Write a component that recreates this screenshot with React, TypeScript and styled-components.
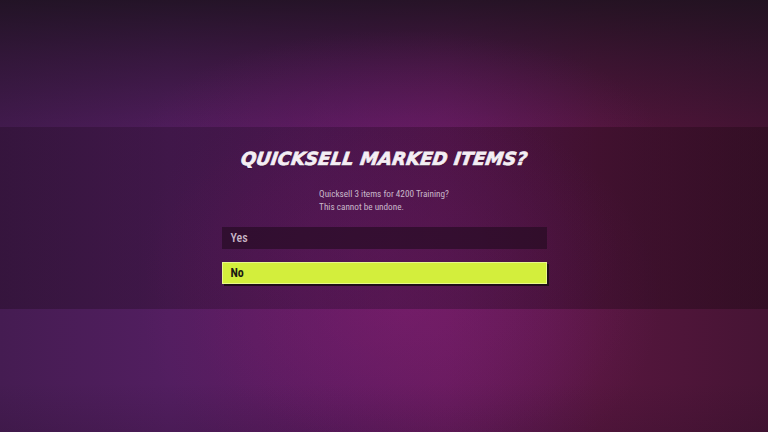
import React from "react";
import styled, { createGlobalStyle } from "styled-components";

const GlobalStyle = createGlobalStyle`
  html, body {
    margin: 0;
    padding: 0;
    background: #2a1428;
  }
`;

const Screen = styled.div`
  width: 768px;
  height: 432px;
  overflow: hidden;
  display: flex;
  flex-direction: column;
  background:
    radial-gradient(ellipse 260px 200px at 400px 300px, rgba(120, 30, 110, 0.5), rgba(120, 30, 110, 0) 100%),
    linear-gradient(90deg, #451c52 0%, #521e60 22%, #5a1a5e 45%, #621a5a 58%, #56163e 78%, #461434 100%);
`;

const Sky = styled.div`
  height: 127px;
  background:
    radial-gradient(ellipse 260px 110px at 400px 140px, rgba(110, 30, 110, 0.45), rgba(110, 30, 110, 0) 100%),
    linear-gradient(180deg, rgba(28, 18, 30, 0.85) 0%, rgba(34, 18, 36, 0.55) 45%, rgba(30, 10, 30, 0.1) 100%);
`;

const Band = styled.section`
  height: 182px;
  box-sizing: border-box;
  padding-top: 20px;
  display: flex;
  flex-direction: column;
  align-items: center;
  background:
    radial-gradient(ellipse 240px 160px at 380px 120px, rgba(100, 24, 96, 0.3), rgba(100, 24, 96, 0) 100%),
    linear-gradient(90deg, rgba(30, 10, 30, 0.4) 0%, rgba(30, 10, 30, 0.3) 40%, rgba(30, 8, 24, 0.35) 70%, rgba(30, 8, 20, 0.45) 100%);
`;

const Floor = styled.div`
  flex: 1;
  background:
    radial-gradient(ellipse 220px 140px at 410px 0px, rgba(130, 30, 110, 0.3), rgba(130, 30, 110, 0) 100%),
    linear-gradient(180deg, rgba(0, 0, 0, 0) 60%, rgba(30, 10, 30, 0.15) 100%);
`;

const Title = styled.h1`
  margin: 0;
  font-family: "DejaVu Sans", "Liberation Sans", sans-serif;
  font-weight: 900;
  font-style: italic;
  font-size: 18px;
  line-height: 24px;
  letter-spacing: 0.1px;
  color: #f4eef4;
  -webkit-text-stroke: 0.7px #f4eef4;
  transform: skewX(-8deg);
  text-shadow: 0 1px 1px rgba(0, 0, 0, 0.35);
`;

const Message = styled.p`
  margin: 16px 0 0;
  font-family: "Liberation Sans Narrow", "Roboto Condensed", "Liberation Sans", sans-serif;
  font-size: 9.2px;
  line-height: 13px;
  color: #c9b9ca;
  text-align: left;
`;

const Options = styled.div`
  margin-top: 14px;
  display: flex;
  flex-direction: column;
  gap: 13px;
  width: 325px;
`;

const Option = styled.div<{ $active?: boolean }>`
  height: 22px;
  box-sizing: border-box;
  padding: 0 8px;
  display: flex;
  align-items: center;
  font-family: "Liberation Sans Narrow", "Roboto Condensed", "Liberation Sans", sans-serif;
  font-weight: ${(p) => (p.$active ? "bold" : 500)};
  font-size: 12px;
  color: ${(p) => (p.$active ? "#1c1a14" : "#c7b6c6")};
  background: ${(p) => (p.$active ? "#d3ee3c" : "rgba(36, 10, 32, 0.65)")};
  border: 1px solid ${(p) => (p.$active ? "#e8f78a" : "transparent")};
  box-shadow: ${(p) => (p.$active ? "2px 2px 0 #1f0c1a" : "none")};
`;

export default function App() {
  return (
    <>
      <GlobalStyle />
      <Screen>
        <Sky />
        <Band>
          <Title>QUICKSELL MARKED ITEMS?</Title>
          <Message>
            Quicksell 3 items for 4200 Training?
            <br />
            This cannot be undone.
          </Message>
          <Options>
            <Option>Yes</Option>
            <Option $active>No</Option>
          </Options>
        </Band>
        <Floor />
      </Screen>
    </>
  );
}
